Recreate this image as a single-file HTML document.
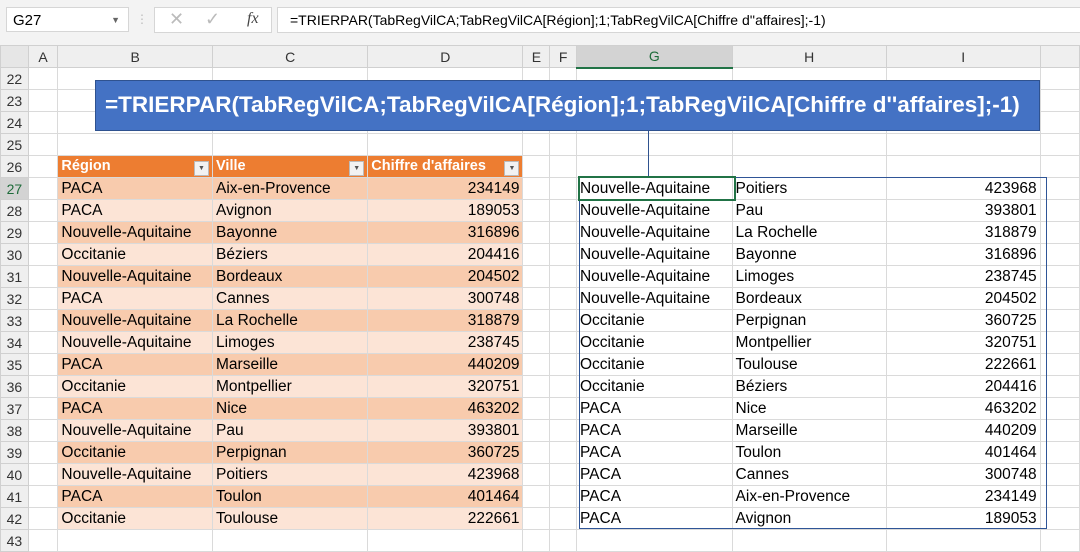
<!DOCTYPE html>
<html><head><meta charset="utf-8"><style>
body{margin:0;width:1080px;height:544px;overflow:hidden;background:#fff;font-family:"Liberation Sans",sans-serif;position:relative}
.top{position:absolute;left:0;top:0;width:1080px;height:45px;background:#f3f3f3;border-bottom:1px solid #d6d6d6}
.nb{position:absolute;left:6px;top:7px;width:123px;height:25px;background:#fff;border:1px solid #d6d6d6;font-size:15px;line-height:25px;padding-left:6px;box-sizing:border-box}
.fb{position:absolute;left:154px;top:7px;width:118px;height:26px;background:#fff;border:1px solid #d6d6d6;box-sizing:border-box;color:#bbb;font-size:18px}
.fi{position:absolute;left:277px;top:7px;width:810px;height:26px;background:#fff;border:1px solid #d6d6d6;box-sizing:border-box;font-size:14px;line-height:24px;padding-left:12px}
table{position:absolute;left:0;top:45px;border-collapse:collapse;table-layout:fixed;font-size:15.5px}
tr{height:22px}
td{height:22px;border:1px solid #dadada;padding:0 3px;white-space:nowrap;overflow:hidden;box-sizing:border-box}
tr.h td{background:#efefef;text-align:center;color:#333;border-color:#d0d0d0;font-size:14px}
td.rh{background:#efefef;text-align:center;color:#333;padding:0;border-color:#d0d0d0;font-size:14px}
.o1{background:#f8cbad}.o2{background:#fce4d6}
.th{background:#ed7d31;color:#fff;font-weight:bold;font-size:14.5px}
.r{text-align:right}
.sel{background:#d3d3d3!important;color:#1e6b3a!important}
.blue{position:absolute;left:95px;top:80px;width:945px;height:51px;background:#4472c4;border:1px solid #2f528f;box-sizing:border-box;color:#fff;font-weight:bold;font-size:22.5px;line-height:48px;padding-left:9px;white-space:nowrap}
.line{position:absolute;left:648px;top:131px;width:1px;height:47px;background:#2f528f}
.rng{position:absolute;left:579px;top:177px;width:468px;height:352px;border:1px solid #2f5597;box-sizing:border-box}
.g27{position:absolute;left:578px;top:176px;width:158px;height:25px;border:2px solid #217346;box-sizing:border-box}
.dd{float:right;width:13px;height:13px;background:#f2f2f2;border:1px solid #bbb;margin-top:3px;font-size:7px;color:#555;text-align:center;line-height:13px}
</style></head><body>
<div class="top">
<div class="nb">G27<span style="position:absolute;right:8px;top:0;font-size:9px;color:#666">▼</span></div>
<div style="position:absolute;left:136px;top:12px;color:#bbb;font-size:12px">⋮</div>
<div class="fb"><span style="position:absolute;left:14px;top:1px">✕</span><span style="position:absolute;left:50px;top:1px">✓</span><span style="position:absolute;left:92px;top:2px;color:#444;font-style:italic;font-family:'Liberation Serif',serif;font-size:16px">fx</span></div>
<div class="fi">=TRIERPAR(TabRegVilCA;TabRegVilCA[Région];1;TabRegVilCA[Chiffre d''affaires];-1)</div>
</div>
<table>
<colgroup><col style="width:28px"><col style="width:30px"><col style="width:155px"><col style="width:156px"><col style="width:156px"><col style="width:27px"><col style="width:27px"><col style="width:156px"><col style="width:155px"><col style="width:156px"><col style="width:40px"></colgroup>
<tr class="h"><td style="background:#e6e6e6"></td><td>A</td><td>B</td><td>C</td><td>D</td><td>E</td><td>F</td><td class="sel" style="border-bottom:2px solid #217346">G</td><td>H</td><td>I</td><td></td></tr>
<tr><td class="rh">22</td><td></td><td></td><td></td><td></td><td></td><td></td><td></td><td></td><td></td><td></td></tr>
<tr><td class="rh">23</td><td></td><td></td><td></td><td></td><td></td><td></td><td></td><td></td><td></td><td></td></tr>
<tr><td class="rh">24</td><td></td><td></td><td></td><td></td><td></td><td></td><td></td><td></td><td></td><td></td></tr>
<tr><td class="rh">25</td><td></td><td></td><td></td><td></td><td></td><td></td><td></td><td></td><td></td><td></td></tr>
<tr><td class="rh">26</td><td></td><td class="th">Région<span class="dd">▼</span></td><td class="th">Ville<span class="dd">▼</span></td><td class="th">Chiffre d'affaires<span class="dd">▼</span></td><td></td><td></td><td></td><td></td><td></td><td></td></tr>
<tr><td class="rh sel">27</td><td></td><td class="o1">PACA</td><td class="o1">Aix-en-Provence</td><td class="o1 r">234149</td><td></td><td></td><td>Nouvelle-Aquitaine</td><td>Poitiers</td><td class="r">423968</td><td></td></tr>
<tr><td class="rh">28</td><td></td><td class="o2">PACA</td><td class="o2">Avignon</td><td class="o2 r">189053</td><td></td><td></td><td>Nouvelle-Aquitaine</td><td>Pau</td><td class="r">393801</td><td></td></tr>
<tr><td class="rh">29</td><td></td><td class="o1">Nouvelle-Aquitaine</td><td class="o1">Bayonne</td><td class="o1 r">316896</td><td></td><td></td><td>Nouvelle-Aquitaine</td><td>La Rochelle</td><td class="r">318879</td><td></td></tr>
<tr><td class="rh">30</td><td></td><td class="o2">Occitanie</td><td class="o2">Béziers</td><td class="o2 r">204416</td><td></td><td></td><td>Nouvelle-Aquitaine</td><td>Bayonne</td><td class="r">316896</td><td></td></tr>
<tr><td class="rh">31</td><td></td><td class="o1">Nouvelle-Aquitaine</td><td class="o1">Bordeaux</td><td class="o1 r">204502</td><td></td><td></td><td>Nouvelle-Aquitaine</td><td>Limoges</td><td class="r">238745</td><td></td></tr>
<tr><td class="rh">32</td><td></td><td class="o2">PACA</td><td class="o2">Cannes</td><td class="o2 r">300748</td><td></td><td></td><td>Nouvelle-Aquitaine</td><td>Bordeaux</td><td class="r">204502</td><td></td></tr>
<tr><td class="rh">33</td><td></td><td class="o1">Nouvelle-Aquitaine</td><td class="o1">La Rochelle</td><td class="o1 r">318879</td><td></td><td></td><td>Occitanie</td><td>Perpignan</td><td class="r">360725</td><td></td></tr>
<tr><td class="rh">34</td><td></td><td class="o2">Nouvelle-Aquitaine</td><td class="o2">Limoges</td><td class="o2 r">238745</td><td></td><td></td><td>Occitanie</td><td>Montpellier</td><td class="r">320751</td><td></td></tr>
<tr><td class="rh">35</td><td></td><td class="o1">PACA</td><td class="o1">Marseille</td><td class="o1 r">440209</td><td></td><td></td><td>Occitanie</td><td>Toulouse</td><td class="r">222661</td><td></td></tr>
<tr><td class="rh">36</td><td></td><td class="o2">Occitanie</td><td class="o2">Montpellier</td><td class="o2 r">320751</td><td></td><td></td><td>Occitanie</td><td>Béziers</td><td class="r">204416</td><td></td></tr>
<tr><td class="rh">37</td><td></td><td class="o1">PACA</td><td class="o1">Nice</td><td class="o1 r">463202</td><td></td><td></td><td>PACA</td><td>Nice</td><td class="r">463202</td><td></td></tr>
<tr><td class="rh">38</td><td></td><td class="o2">Nouvelle-Aquitaine</td><td class="o2">Pau</td><td class="o2 r">393801</td><td></td><td></td><td>PACA</td><td>Marseille</td><td class="r">440209</td><td></td></tr>
<tr><td class="rh">39</td><td></td><td class="o1">Occitanie</td><td class="o1">Perpignan</td><td class="o1 r">360725</td><td></td><td></td><td>PACA</td><td>Toulon</td><td class="r">401464</td><td></td></tr>
<tr><td class="rh">40</td><td></td><td class="o2">Nouvelle-Aquitaine</td><td class="o2">Poitiers</td><td class="o2 r">423968</td><td></td><td></td><td>PACA</td><td>Cannes</td><td class="r">300748</td><td></td></tr>
<tr><td class="rh">41</td><td></td><td class="o1">PACA</td><td class="o1">Toulon</td><td class="o1 r">401464</td><td></td><td></td><td>PACA</td><td>Aix-en-Provence</td><td class="r">234149</td><td></td></tr>
<tr><td class="rh">42</td><td></td><td class="o2">Occitanie</td><td class="o2">Toulouse</td><td class="o2 r">222661</td><td></td><td></td><td>PACA</td><td>Avignon</td><td class="r">189053</td><td></td></tr>
<tr><td class="rh">43</td><td></td><td></td><td></td><td></td><td></td><td></td><td></td><td></td><td></td><td></td></tr>
</table>
<div class="blue">=TRIERPAR(TabRegVilCA;TabRegVilCA[Région];1;TabRegVilCA[Chiffre d''affaires];-1)</div>
<div class="line"></div>
<div class="rng"></div>
<div class="g27"></div>
</body></html>
